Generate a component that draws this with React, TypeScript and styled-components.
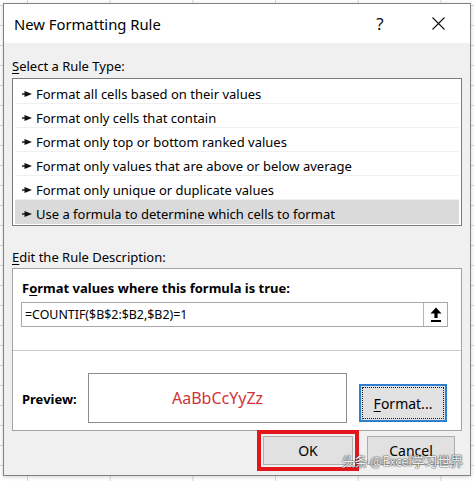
import React from "react";
import styled, { createGlobalStyle } from "styled-components";

const Global = createGlobalStyle`
  html, body { margin: 0; padding: 0; }
  body {
    width: 474px;
    height: 481px;
    overflow: hidden;
    background-color: #ffffff;
    background-image:
      linear-gradient(to right, #d6d6d6 1px, transparent 1px),
      linear-gradient(to bottom, #d6d6d6 1px, transparent 1px);
    background-size: 82.7px 100%, 100% 20px;
    background-position: 27px 0, 0 5px;
    font-family: "Noto Sans", "Open Sans", sans-serif;
    color: #000;
  }
`;

const Page = styled.div`
  padding: 3px 3px 0 3px;
  box-sizing: border-box;
  width: 474px;
  height: 481px;
`;

const Dialog = styled.div`
  position: relative;
  width: 468px;
  height: 473px;
  box-sizing: border-box;
  border: 1px solid #828282;
  background: #f0f0f0;
  box-shadow: 0 1px 4px rgba(0, 0, 0, 0.18);
  display: flex;
  flex-direction: column;
`;

const TitleBar = styled.div`
  height: 39px;
  flex: none;
  background: #ffffff;
  display: flex;
  align-items: center;
  padding: 0 9px 0 10px;
  gap: 12px;
`;

const Title = styled.div`
  flex: 1;
  font-size: 14.8px;
  color: #000;
`;

const TitleButton = styled.div`
  width: 46px;
  height: 39px;
  display: flex;
  align-items: center;
  justify-content: center;
  font-size: 17px;
  color: #111;
`;

const Body = styled.div`
  flex: 1;
  display: flex;
  flex-direction: column;
  padding: 0 8px;
`;

const SectionLabel = styled.div<{ $top: number }>`
  margin-top: ${(p) => p.$top}px;
  height: 20px;
  line-height: 20px;
  font-size: 13px;
`;

const Key = styled.span`
  text-decoration: underline;
  text-underline-offset: 2px;
`;

const ListBox = styled.div`
  margin-top: 2px;
  height: 148px;
  box-sizing: border-box;
  border: 1px solid #7a7a7a;
  background: #ffffff;
  padding: 1px 2px;
  display: flex;
  flex-direction: column;
`;

const Row = styled.div<{ $selected?: boolean }>`
  height: 24px;
  box-sizing: border-box;
  display: flex;
  align-items: center;
  gap: 4px;
  padding: 5px 0 0 7px;
  font-size: 13px;
  background: ${(p) => (p.$selected ? "#dadada" : "transparent")};
  border-bottom: 1px solid ${(p) => (p.$selected ? "#dadada" : "#f0f0f0")};
  white-space: nowrap;
`;

const DescBox = styled.div`
  margin-top: 1px;
  height: 163px;
  box-sizing: border-box;
  border: 1px solid #a3a3a3;
  background: #ffffff;
  display: flex;
  flex-direction: column;
`;

const FormulaSection = styled.div`
  height: 82px;
  box-sizing: border-box;
  border-bottom: 1px solid #c8c8c8;
  padding: 9px 13px 0 8px;
  display: flex;
  flex-direction: column;
`;

const BoldLabel = styled.div`
  height: 20px;
  line-height: 20px;
  font-size: 13px;
  font-weight: 700;
  padding-left: 1px;
`;

const FormulaInput = styled.div`
  margin-top: 4px;
  height: 25px;
  box-sizing: border-box;
  border: 1px solid #a8a8a8;
  display: flex;
  align-items: stretch;
`;

const FormulaText = styled.div`
  flex: 1;
  display: flex;
  align-items: center;
  padding-left: 3px;
  font-size: 12.4px;
`;

const CollapseButton = styled.div`
  width: 24px;
  box-sizing: border-box;
  border-left: 1px solid #b4b4b4;
  display: flex;
  align-items: center;
  justify-content: center;
  background: #fdfdfd;
`;

const PreviewRow = styled.div`
  display: flex;
  align-items: flex-start;
  padding: 22px 0 0 9px;
`;

const PreviewLabel = styled.div`
  width: 66px;
  margin-top: 16px;
  height: 20px;
  line-height: 20px;
  font-size: 13px;
  font-weight: 700;
`;

const PreviewBox = styled.div`
  width: 259px;
  height: 50px;
  box-sizing: border-box;
  border: 1px solid #8c8c8c;
  display: flex;
  align-items: center;
  justify-content: center;
  font-size: 16px;
  color: #d0343a;
`;

const Button = styled.div<{ $width: number }>`
  position: relative;
  width: ${(p) => p.$width}px;
  height: 29px;
  box-sizing: border-box;
  border: 1px solid #adadad;
  background: #e1e1e1;
  display: flex;
  align-items: center;
  justify-content: center;
  font-size: 14px;
  color: #000;
`;

const FormatButton = styled(Button)`
  margin: 11px 0 0 12px;
  height: 38px;
  border: 2px solid #2f7fd1;
  &::after {
    content: "";
    position: absolute;
    inset: 1px;
    border: 1px dotted #1e1e1e;
  }
`;

const HighlightButton = styled(Button)`
  outline: 4px solid #e3161c;
  outline-offset: 2px;
`;

const ButtonRow = styled.div`
  margin-top: 5px;
  display: flex;
  justify-content: flex-end;
  gap: 14px;
  padding-right: 7px;
`;

const Watermark = styled.div`
  position: absolute;
  right: 7px;
  bottom: 5px;
  font-family: "Noto Sans CJK SC", "Noto Sans", sans-serif;
  font-size: 13px;
  color: rgba(255, 255, 255, 0.92);
  text-shadow:
    0 0 1px #4a4a4a,
    0 0 1px #4a4a4a,
    0 0 2px rgba(0, 0, 0, 0.5);
  letter-spacing: -0.2px;
  white-space: nowrap;
`;

const Arrow = () => (
  <svg width="10" height="8" viewBox="0 0 10 8">
    <rect x="0" y="3.3" width="4" height="1.4" fill="#111" />
    <polygon points="2.5,1 10,4 2.5,7" fill="#111" />
  </svg>
);

const CloseIcon = () => (
  <svg width="13" height="13" viewBox="0 0 13 13">
    <path d="M0.5 0.5 L12.5 12.5 M12.5 0.5 L0.5 12.5" stroke="#111" strokeWidth="1.1" />
  </svg>
);

const CollapseIcon = () => (
  <svg width="12" height="16" viewBox="0 0 12 16">
    <polygon points="6,0.5 11.5,6.5 7.6,6.5 7.6,11 4.4,11 4.4,6.5 0.5,6.5" fill="#000" />
    <rect x="1" y="13" width="10" height="2" fill="#000" />
  </svg>
);

const ruleTypes = [
  "Format all cells based on their values",
  "Format only cells that contain",
  "Format only top or bottom ranked values",
  "Format only values that are above or below average",
  "Format only unique or duplicate values",
  "Use a formula to determine which cells to format",
];

export default function App() {
  return (
    <Page>
      <Global />
      <Dialog>
        <TitleBar>
          <Title>New Formatting Rule</Title>
          <TitleButton>?</TitleButton>
          <TitleButton>
            <CloseIcon />
          </TitleButton>
        </TitleBar>
        <Body>
          <SectionLabel $top={13}>
            <Key>S</Key>elect a Rule Type:
          </SectionLabel>
          <ListBox>
            {ruleTypes.map((t, i) => (
              <Row key={t} $selected={i === ruleTypes.length - 1}>
                <Arrow />
                <span>{t}</span>
              </Row>
            ))}
          </ListBox>
          <SectionLabel $top={21}>
            <Key>E</Key>dit the Rule Description:
          </SectionLabel>
          <DescBox>
            <FormulaSection>
              <BoldLabel>
                F<Key>o</Key>rmat values where this formula is true:
              </BoldLabel>
              <FormulaInput>
                <FormulaText>=COUNTIF($B$2:$B2,$B2)=1</FormulaText>
                <CollapseButton>
                  <CollapseIcon />
                </CollapseButton>
              </FormulaInput>
            </FormulaSection>
            <PreviewRow>
              <PreviewLabel>Preview:</PreviewLabel>
              <PreviewBox>AaBbCcYyZz</PreviewBox>
              <FormatButton $width={88}>
                <span>
                  <Key>F</Key>ormat...
                </span>
              </FormatButton>
            </PreviewRow>
          </DescBox>
          <ButtonRow>
            <HighlightButton $width={90}>OK</HighlightButton>
            <Button $width={88}>Cancel</Button>
          </ButtonRow>
        </Body>
        <Watermark>头条 @Excel学习世界</Watermark>
      </Dialog>
    </Page>
  );
}
